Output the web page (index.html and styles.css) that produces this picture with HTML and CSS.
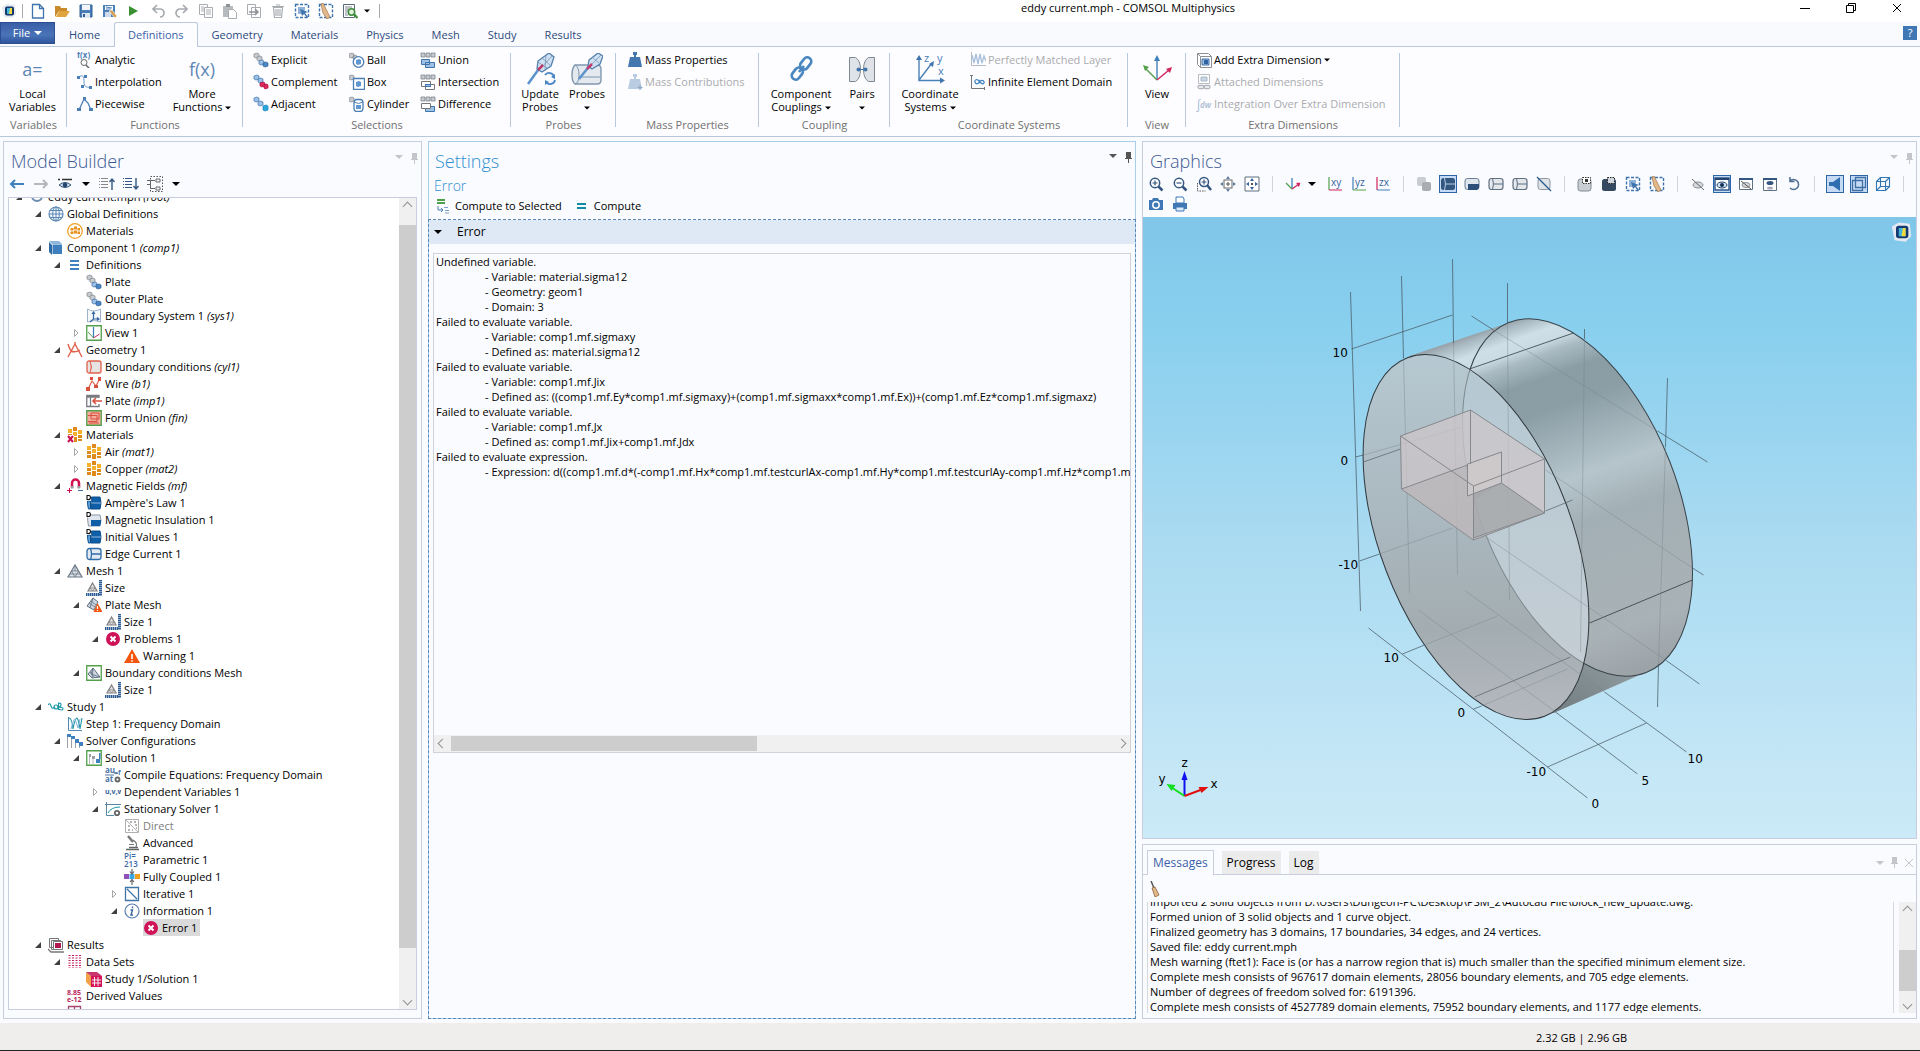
FILE: index.html
```html
<!DOCTYPE html>
<html lang="en">
<head>
<meta charset="utf-8">
<title>eddy current.mph - COMSOL Multiphysics</title>
<link rel="stylesheet" href="styles.css">
</head>
<body>
<svg class="sprite" aria-hidden="true">
<symbol id="app" viewBox="0 0 16 16"><path d="M1 4l5-3 8 1 1 9-4 4-8-1z" fill="#e4e9f1"/><rect x="4" y="3.500" width="9" height="9" rx="2" fill="#14386f"/><path d="M6 5h5v6H6z" fill="#3fb4dd"/><path d="M9 5h2v6H8z" fill="#f3d93f"/></symbol>
<symbol id="new" viewBox="0 0 16 16"><path d="M2.500 1.500h7l4 4v9.500h-11z M9.500 1.500v4h4" fill="#fff" stroke="#3f74ad" stroke-width="1.300"/></symbol>
<symbol id="open" viewBox="0 0 16 16"><path d="M1 14V3h5l1 2h6v3H5z" fill="#c98a2c"/><path d="M2 14l3-6h11l-4 6z" fill="#e0a53e"/></symbol>
<symbol id="save" viewBox="0 0 16 16"><path d="M2 2h12v12H2z" fill="#4a7fb8" stroke="#2f5f95"/><path d="M4 2h8v5H4z" fill="#f2f6fb"/><path d="M4 10h8v5H4z" fill="#dfe7f1"/><path d="M5 11h2v3H5z" fill="#2f5f95"/></symbol>
<symbol id="saveas" viewBox="0 0 16 16"><path d="M1 2h12v12H1z" fill="#4a7fb8"/><path d="M3 3h8v4H3z" fill="#fff"/><path d="M3 9h6v5H3z" fill="#cfdbea"/><path d="M4 4l6 1M4 6h5" stroke="#4a7fb8"/><path d="M7 8l3-1 5 6-2 2z" fill="#d9a04c" stroke="#fff" stroke-width=".6"/></symbol>
<symbol id="run" viewBox="0 0 16 16"><path d="M3 3l9 5-9 5z" fill="#3b9132"/></symbol>
<symbol id="undo" viewBox="0 0 16 16"><path d="M3 6h7a4 4 0 0 1 0 8M7 2L3 6l4 4" fill="none" stroke="#a6aab0" stroke-width="1.700"/></symbol>
<symbol id="redo" viewBox="0 0 16 16"><path d="M13 6H6a4 4 0 0 0 0 8M9 2l4 4-4 4" fill="none" stroke="#a6aab0" stroke-width="1.700"/></symbol>
<symbol id="copy" viewBox="0 0 16 16"><path d="M1.500 1.500h8v10h-8z" fill="#fff" stroke="#a9adb2"/><path d="M6.500 4.500h8v10h-8z" fill="#fff" stroke="#a9adb2"/><path d="M3 4h3M3 6h3M3 8h3M8 7h5M8 9h5M8 11h5" stroke="#a9adb2"/></symbol>
<symbol id="paste" viewBox="0 0 16 16"><path d="M1 3h10v11H1z" fill="#b7babf"/><path d="M4 1h4v3H4z" fill="#8f9398"/><path d="M6.500 6.500h5l3 3v6h-8z" fill="#fff" stroke="#a9adb2"/></symbol>
<symbol id="dup" viewBox="0 0 16 16"><path d="M1.500 1.500h8v10h-8zM5.500 4.500h9v10h-9z" fill="#fff" stroke="#a9adb2"/><path d="M3 9h8M9 6l3 3-3 3" fill="none" stroke="#8f9398" stroke-width="1.500"/></symbol>
<symbol id="del" viewBox="0 0 16 16"><path d="M3.500 4.500h9l-1 10h-7zM2 3.500h12M6 2h4M6 6v7M8 6v7M10 6v7" fill="none" stroke="#a9adb2" stroke-width="1.200"/></symbol>
<symbol id="sel" viewBox="0 0 16 16"><path d="M1.500 1.500h13v13h-13z" fill="none" stroke="#3f74ad" stroke-width="1.400" stroke-dasharray="3 1.500"/><path d="M4 4h7v3l-4 4H4z" fill="#8fb2d8"/><path d="M6 6l8 3-3 1 3 4-1 1-3-4-2 2z" fill="#3f74ad"/></symbol>
<symbol id="selx" viewBox="0 0 16 16"><path d="M1.500 1.500h13v13h-13z" fill="none" stroke="#3f74ad" stroke-width="1.400" stroke-dasharray="3 1.500"/><path d="M3 1l2-1 4 8 3 6-3 2-4-6z" fill="#e2b98a" stroke="#9c7146" stroke-width=".7"/></symbol>
<symbol id="find" viewBox="0 0 16 16"><path d="M1.500 1.500h11v13h-11z" fill="#fff" stroke="#5b6a78"/><path d="M3 4h7M3 6h4M3 8h3M3 10h2M3 12h3" stroke="#7c8793"/><circle cx="9.500" cy="9" r="3.200" fill="#dff0dc" stroke="#3d8c38" stroke-width="1.500"/><path d="M12 11l3.500 4" stroke="#3d8c38" stroke-width="2"/></symbol>
<symbol id="down" viewBox="0 0 8 8"><path d="M0 2h8L4 6z" fill="currentColor"/></symbol>
<symbol id="pin" viewBox="0 0 10 12"><path d="M3 0h5v6h1v1H6v4H5V7H2V6h1z" fill="currentColor"/></symbol>
<symbol id="x" viewBox="0 0 10 10"><path d="M1 1l8 8M9 1L1 9" stroke="currentColor" fill="none"/></symbol>
<symbol id="min" viewBox="0 0 10 10"><path d="M0 5.500h10" stroke="currentColor"/></symbol>
<symbol id="rest" viewBox="0 0 10 10"><path d="M.5 2.500h7v7h-7zM2.500 2.500v-2h7v7h-2" fill="none" stroke="currentColor"/></symbol>
<symbol id="analytic" viewBox="0 0 16 16"><text x="0" y="6" font-size="8" font-weight="700" fill="#4a7fb5">f(x)</text><circle cx="7" cy="10.500" r="3" fill="#fff" stroke="#666"/><path d="M9 13l3 3" stroke="#666" stroke-width="1.500"/></symbol>
<symbol id="interp" viewBox="0 0 16 16"><path d="M1 4c5-5 6-1 6 4s3 6 8 5" fill="none" stroke="#6d9bc9"/><path d="M0 2h3v3H0zM7 1h3v3H7zM4 11h3v3H4zM12 12h3v3h-3z" fill="#4a7fb5"/></symbol>
<symbol id="piece" viewBox="0 0 16 16"><path d="M2 14L7 3l4 4 3 7" fill="none" stroke="#4a7fb5" stroke-width="1.300"/><path d="M0 12h4v3H0zM6 1h3v3H6zM12 12h4v3h-4z" fill="#4a7fb5"/></symbol>
<symbol id="explicit" viewBox="0 0 16 16"><g stroke="#7f868e" stroke-width=".7"><path d="M1 2l3-1 2 1v3L3 6 1 5z" fill="#c7cbd0"/><path d="M4 5l3-1 2 1v3L6 9 4 8z" fill="#c7cbd0"/></g><path d="M6 9l3-1 2 1v3l-3 1-2-1z" fill="#9cc0e6" stroke="#3f74ad" stroke-width=".7"/><path d="M10 11l3-1 2 1v3l-3 1-2-1z" fill="#4a86c4" stroke="#2f5f95" stroke-width=".7"/></symbol>
<symbol id="complement" viewBox="0 0 16 16"><g stroke="#3f74ad" stroke-width=".7" fill="#9cc0e6"><path d="M1 2l3-1 2 1v3L3 6 1 5z"/><path d="M5 5l3-1 2 1v3L7 9 5 8z"/></g><g fill="#e0285e" stroke="#a8103f" stroke-width=".7"><path d="M7 9l3-1 2 1v3l-3 1-2-1z"/><path d="M11 11l3-1 1 1v3l-3 1-1-1z"/></g></symbol>
<symbol id="adjacent" viewBox="0 0 16 16"><g stroke="#3f74ad" stroke-width=".7" fill="#9cc0e6"><path d="M1 2l3-1 2 1v3L3 6 1 5z"/><path d="M5 6l3-1 2 1v3l-3 1-2-1z"/></g><path d="M10 10l3-1 2 1v4l-3 1-2-1z" fill="#29a8e0" stroke="#1b82b3" stroke-width=".7"/></symbol>
<symbol id="ball" viewBox="0 0 16 16"><path d="M0 2l3-1 2 1v3L2 6 0 5zM4 4l2-1 2 1v3H4z" fill="#c7cbd0" stroke="#7f868e" stroke-width=".7"/><circle cx="9.500" cy="10" r="5.300" fill="#fff" stroke="#4a7fb5" stroke-width="1.300"/><path d="M7 8l3-1 2 1v4l-3 1-2-1z" fill="#5f97d0"/></symbol>
<symbol id="box" viewBox="0 0 16 16"><path d="M0 2l3-1 2 1v3L2 6 0 5z" fill="#c7cbd0" stroke="#7f868e" stroke-width=".7"/><path d="M4.500 4.500h11v11h-11z" fill="#fff" stroke="#4a7fb5" stroke-width="1.300"/><path d="M7 8l3-1 2 1v4l-3 1-2-1z" fill="#5f97d0"/></symbol>
<symbol id="cyl" viewBox="0 0 16 16"><path d="M0 2l3-1 2 1v3L2 6 0 5z" fill="#c7cbd0" stroke="#7f868e" stroke-width=".7"/><rect x="5" y="3.500" width="9" height="12" rx="3" fill="#fff" stroke="#4a7fb5" stroke-width="1.300"/><path d="M5 6q4.500 3 9 0" fill="none" stroke="#4a7fb5"/><path d="M7 9h5v4H7z" fill="#5f97d0"/></symbol>
<symbol id="union" viewBox="0 0 16 16"><path d="M1 1h4v4H1zM6 1h4v4H6zM11 1h4v4h-4z" fill="#c7cbd0" stroke="#7f868e" stroke-width=".8"/><path d="M1.500 7.500h8v5h-8zM5.500 10.500h9v5h-9z" fill="#9fc1e4" stroke="#3f74ad"/></symbol>
<symbol id="inter" viewBox="0 0 16 16"><path d="M1 1h4v4H1zM6 1h4v4H6zM11 1h4v4h-4z" fill="#c7cbd0" stroke="#7f868e" stroke-width=".8"/><path d="M1.500 7.500h9v5h-9zM5.500 10.500h9v5h-9z" fill="#fff" stroke="#777"/><path d="M5.500 10.500h5v2h-5z" fill="#9fc1e4" stroke="#3f74ad"/></symbol>
<symbol id="diff" viewBox="0 0 16 16"><path d="M1 1h4v4H1zM6 1h4v4H6zM11 1h4v4h-4z" fill="#c7cbd0" stroke="#7f868e" stroke-width=".8"/><path d="M5.500 10.500h9v5h-9z" fill="#9fc1e4" stroke="#3f74ad"/><path d="M1.500 7.500h9v5h-9z" fill="#fff" stroke="#777"/></symbol>
<symbol id="uprobe" viewBox="0 0 32 32"><path d="M4 31L17 13" stroke="#5b93cc" stroke-width="2.500"/><path d="M14 8l11-8 5 4-3 9-9 6-5-3z" fill="#cfe1f3" stroke="#5580ac" stroke-width="1.300"/><path d="M17 15L28 3M18 5l8 7M14 9l9 6M22 2l-1 14" stroke="#7795b3" stroke-width=".8"/><path d="M14 17l5-5" stroke="#c23a6b" stroke-width="2.500"/><path d="M21 22a5 5 0 0 1 9 2M31 27a5 5 0 0 1-9 2" fill="none" stroke="#4a86c4" stroke-width="1.800"/><path d="M31 21v5l-4-2zM21 32v-5l4 2z" fill="#4a86c4"/></symbol>
<symbol id="probe" viewBox="0 0 32 32"><path d="M4 12h22q4 0 4 4v11q0 4-4 4H4q-3-2-3-9t3-10z" fill="#e4e9ef" stroke="#7f97ae" stroke-width="1.400"/><path d="M4 12q4 2 4 10t-4 9M8 24h21" fill="none" stroke="#7f97ae"/><path d="M8 26L20 11" stroke="#5b93cc" stroke-width="2.500"/><path d="M18 7l9-7 5 3-3 8-8 5-4-3z" fill="#cfe1f3" stroke="#5580ac" stroke-width="1.300"/><path d="M20 12L30 2M21 4l7 6" stroke="#7795b3" stroke-width=".8"/><path d="M16 16l5-5" stroke="#c23a6b" stroke-width="2.500"/></symbol>
<symbol id="mass" viewBox="0 0 16 16"><path d="M6 0h4v3H9v2h4l2 10H1L3 5h4V3H6z" fill="#4377ae"/></symbol>
<symbol id="massc" viewBox="0 0 16 16"><path d="M6 0h4v3H9v2h4l2 10H1L3 5h4V3H6z" fill="#b9cce2"/><path d="M13 11v5M10.500 13.500h5" stroke="#8fa8c5" stroke-width="1.200"/></symbol>
<symbol id="link" viewBox="0 0 32 32"><g fill="none" stroke="#4a86c0" stroke-width="2.700"><rect x="17" y="4" width="8" height="13" rx="4" transform="rotate(38 21 10)"/><rect x="8" y="14" width="8" height="13" rx="4" transform="rotate(38 12 21)"/><path d="M14 19l5-6"/></g></symbol>
<symbol id="pairs" viewBox="0 0 32 32"><path d="M3.500 4.500h6q5 3 5 12t-5 12h-6zM28.500 4.500h-6q-5 3-5 12t5 12h6z" fill="#dfe3e8" stroke="#7d8893"/><circle cx="12.500" cy="16.500" r="2" fill="#3f74ad"/><circle cx="19.500" cy="16.500" r="2" fill="#3f74ad"/><path d="M12 16.500h8" stroke="#3f74ad"/></symbol>
<symbol id="coord" viewBox="0 0 32 32"><path d="M5 5v22.500h23M5 27l13-17" fill="none" stroke="#4a80b8" stroke-width="1.400"/><path d="M5 2l3 5H2zM31 27.500l-5 3v-6zM20 8l-1 6-4-3z" fill="#3f74ad"/><text x="10" y="9" font-size="11" fill="#4a80b8">z</text><text x="23" y="9" font-size="11" fill="#4a80b8">y</text><text x="24" y="22" font-size="11" fill="#4a80b8">x</text></symbol>
<symbol id="pml" viewBox="0 0 16 16"><path d="M1.500 0v13.500H16" fill="none" stroke="#b5bcc4"/><path d="M2 3l2 8 2-9 2 10L10 2l2 9 2-7 2 5" fill="none" stroke="#a9c0da" stroke-width="1.300"/></symbol>
<symbol id="inf" viewBox="0 0 16 16"><path d="M1.500 1v13.500H15M0 1.500h3M14.500 13v3" fill="none" stroke="#76777a"/><path d="M9.500 8c-3-5-6-1-4 1s4-1 4-1 2-3 4-1-1 5-4 0z" fill="none" stroke="#3f80c0" stroke-width="1.200"/></symbol>
<symbol id="view" viewBox="0 0 32 32"><path d="M16 27V6" stroke="#3f80b8" stroke-width="1.400"/><path d="M16 2l3 6h-6z" fill="#3f80b8"/><path d="M16 27L5 16" stroke="#52a04a" stroke-width="1.400"/><path d="M2 12l6 2-4 4z" fill="#52a04a"/><path d="M16 27l12-10" stroke="#d0245a" stroke-width="1.400"/><path d="M31 14l-2 6-4-4z" fill="#d0245a"/></symbol>
<symbol id="adddim" viewBox="0 0 16 16"><path d="M1.500 1.500h11l3 3v11h-11l-3-3zM1.500 1.500l3 3h11M4.500 4.500v11" fill="#fff" stroke="#8b9096"/><path d="M6 7h7v6H6z" fill="#9fc1e4" stroke="#3f6ea8"/><path d="M8 8h4v4H8z" fill="#2f62a0"/></symbol>
<symbol id="attdim" viewBox="0 0 16 16"><path d="M2.500.5h11v9h-11z" fill="#fff" stroke="#b9bdc2"/><path d="M5 3h6v4H5z" fill="#c9d6e6" stroke="#a9b8cc"/><rect x="2" y="11.500" width="6" height="3" rx="1.500" fill="none" stroke="#b0b4b9" stroke-width="1.300"/><rect x="8" y="11.500" width="6" height="3" rx="1.500" fill="none" stroke="#b0b4b9" stroke-width="1.300"/></symbol>
<symbol id="intdim" viewBox="0 0 16 16"><text x="0" y="13" font-size="13" font-style="italic" fill="#a9c0da">∫</text><text x="4" y="12" font-size="8" font-weight="700" font-style="italic" fill="#b3c3d8">dw</text></symbol>

<symbol id="back" viewBox="0 0 16 16"><path d="M15 8H3M6 4L2 8l4 4" fill="none" stroke="#3f80bf" stroke-width="2"/></symbol>
<symbol id="fwd" viewBox="0 0 16 16"><path d="M1 8h12M10 4l4 4-4 4" fill="none" stroke="#b4b7bb" stroke-width="2"/></symbol>
<symbol id="eye" viewBox="0 0 16 16"><path d="M1 3.500h2M5 3.500h10" stroke="#333" stroke-width="1.400"/><path d="M2 9q6-5 12 0-6 5-12 0z" fill="#cfdcea" stroke="#34577f"/><circle cx="8" cy="9" r="2.300" fill="#24466e"/></symbol>
<symbol id="up" viewBox="0 0 16 16"><path d="M0 2.500h1M2 2.500h7M0 5.500h1M2 5.500h7M0 8.500h1M2 8.500h7M0 11.500h1M2 11.500h7" stroke="#888"/><path d="M13 14V3M10.500 6L13 3l2.500 3" fill="none" stroke="#34577f" stroke-width="1.400"/></symbol>
<symbol id="dn" viewBox="0 0 16 16"><path d="M0 2.500h1M2 2.500h7M0 5.500h1M2 5.500h7M0 8.500h1M2 8.500h7M0 11.500h1M2 11.500h7" stroke="#34577f"/><path d="M13 2v11M10.500 10l2.500 3 2.500-3" fill="none" stroke="#34577f" stroke-width="1.400"/></symbol>
<symbol id="nodes" viewBox="0 0 16 16"><path d="M3.500.5h12v15h-12z" fill="none" stroke="#555" stroke-dasharray="1.500 1.500"/><path d="M0 4.500h8M3.500 4.500v8H8M0 8.500h3M9 3h4v3H9zM9 11h4v3H9z" fill="none" stroke="#666"/></symbol>
<symbol id="open-arrow" viewBox="0 0 8 8"><path d="M7 1v6H1z" fill="#404040"/></symbol>
<symbol id="shut-arrow" viewBox="0 0 8 8"><path d="M2.500.5v7L6 4z" fill="#fff" stroke="#a6a6a6"/></symbol>
<symbol id="root" viewBox="0 0 16 16"><circle cx="8" cy="7" r="5" fill="none" stroke="#6d8db5" stroke-width="2"/></symbol>
<symbol id="globe" viewBox="0 0 16 16"><circle cx="8" cy="8" r="7" fill="#f4f8fc" stroke="#5b87b5" stroke-width="1.200"/><ellipse cx="8" cy="8" rx="3.300" ry="7" fill="none" stroke="#5b87b5"/><path d="M1 8h14M2 4.500h12M2 11.500h12M8 1v14" stroke="#5b87b5"/></symbol>
<symbol id="matc" viewBox="0 0 16 16"><circle cx="8" cy="8" r="7.300" fill="#fff" stroke="#f0a028" stroke-width="1.300"/><path d="M3.500 5h3v2.500h-3zM7 3.500h3v3H7zM10.500 5H13v2.500h-2.500zM3.500 8.500h3V11h-3zM7 7.500h3v3H7zM10.500 8.500H13V11h-2.500z" fill="#e8901c"/></symbol>
<symbol id="mat" viewBox="0 0 16 16"><path d="M1 2h4v4H1zM11 3h4v4h-4zM6 5h4v4H6z" fill="#f5b02c"/><path d="M6 0h4v4H6zM1 7h4v3H1zM11 8h4v3h-4zM6 10h4v5H6zM1 11h4v3H1zM11 12h4v2h-4z" fill="#df8a1d"/></symbol>
<symbol id="matx" viewBox="0 0 16 16"><use href="#mat"/><path d="M0 8h7v8H0z" fill="#fff"/><path d="M1 9l5 6M6 9l-5 6" stroke="#cc0f55" stroke-width="2"/></symbol>
<symbol id="comp" viewBox="0 0 16 16"><path d="M1 2l3 3v10l-3-3z" fill="#2f6aa5"/><path d="M1 1h10l3 3H4z" fill="#8db6dd"/><path d="M4.500 4.500H14V14H4.500z" fill="#3f7fbd"/></symbol>
<symbol id="defs" viewBox="0 0 16 16"><path d="M3 4h9M3 8h9M3 12h9" stroke="#3f80bf" stroke-width="2"/></symbol>
<symbol id="bsys" viewBox="0 0 16 16"><path d="M1.500 1q6 4 13 0v13q-6-3-13 0z" fill="#f6f9fc" stroke="#9db4cc"/><path d="M7.500 4v7H13M7.500 11L4 14M6 6l1.500-2L9 6M11 9.500l2 1.500-2 1.500" fill="none" stroke="#3566a0" stroke-width="1.200"/></symbol>
<symbol id="view1" viewBox="0 0 16 16"><path d="M.75.75h14.500v14.500H.75z" fill="#fff" stroke="#53a04b" stroke-width="1.300"/><path d="M7.500 13V2" stroke="#3f80b8" stroke-width="1.300"/><path d="M7.500 13L2 7" stroke="#53a04b"/><path d="M7.500 13l6-4" stroke="#d0245a"/></symbol>
<symbol id="geom" viewBox="0 0 16 16"><path d="M1 2q2 7 5 8M8 2L1 15M8 2l7 13M4 9q4 2 9-1M8 0v3" fill="none" stroke="#e0604c" stroke-width="1.400"/></symbol>
<symbol id="gcyl" viewBox="0 0 16 16"><rect x="1" y="2" width="14" height="12" rx="2" fill="#e6e3e3" stroke="#e0604c" stroke-width="1.300"/><path d="M4 2q3 6 0 12" fill="#f3b7ac" stroke="#e0604c"/></symbol>
<symbol id="wire" viewBox="0 0 16 16"><path d="M2 13L6 5l4 5 4-8" fill="none" stroke="#e0604c" stroke-width="1.200"/><path d="M0 11h4v4H0zM4 1h3v3H4zM8 9h4v3H8zM12 1h3v4h-3z" fill="#d9503c"/></symbol>
<symbol id="imp" viewBox="0 0 16 16"><path d="M13 5V2.500H.75v11H13V11M.75 4h12M4.500 4v9.500" fill="none" stroke="#777b80" stroke-width="1.300"/><path d="M16 8H8M10 5L7 8l3 3" fill="none" stroke="#d9503c" stroke-width="1.600"/></symbol>
<symbol id="fin" viewBox="0 0 16 16"><path d="M.75.75h14.500v14.500H.75z" fill="#f2ae9e" stroke="#53a04b" stroke-width="1.300"/><path d="M2 5.500h9v6H2M5 3h8v6H5zM3 13h10" fill="none" stroke="#d9503c"/></symbol>
<symbol id="magnet" viewBox="0 0 16 16"><path d="M5 10V5a3.500 3.500 0 0 1 7 0v5" fill="none" stroke="#d0104f" stroke-width="2.500"/><path d="M4 8h2.500v2.500H4zM10.500 8H13v2.500h-2.500z" fill="#9a9da1"/><path d="M0 12.500h5M2.500 10v5" stroke="#d0104f"/><path d="M11 12.500h5" stroke="#3f74ad"/></symbol>
<symbol id="dom" viewBox="0 0 16 16"><path d="M5.500 2H14q2 6 0 12H5q1.500-6 .5-12z" fill="#0f5ea8" stroke="#0d4d8a"/><path d="M1.500 6h3v8h-2q-1-3-1-8z" fill="#5da1df" stroke="#0d4d8a"/><path d="M6 8h9" stroke="#cfe0f2" stroke-width=".7"/><path d="M0 0h5v5.500H0z" fill="#fff"/><path d="M1 .5h1.500a2 2 0 0 1 0 4H1z" fill="none" stroke="#111" stroke-width="1.100"/></symbol>
<symbol id="bnd" viewBox="0 0 16 16"><path d="M1.500 3H14q2 5 0 11H2.500q-1-4-1-11z" fill="#dfe6ee" stroke="#8a97a5"/><path d="M5 8h10v3l-1 3H5z" fill="#0f5ea8"/><path d="M0 0h5v5.500H0z" fill="#fff"/><path d="M1 .5h1.500a2 2 0 0 1 0 4H1z" fill="none" stroke="#111" stroke-width="1.100"/></symbol>
<symbol id="edge" viewBox="0 0 16 16"><rect x="1" y="2.500" width="14" height="11" rx="2.500" fill="#e3eaf2" stroke="#2f6ca8" stroke-width="1.300"/><path d="M4.500 2.500q2 5.500 0 11M5 8h10" fill="none" stroke="#2f6ca8" stroke-width="1.300"/></symbol>
<symbol id="mesh" viewBox="0 0 16 16"><path d="M8 2L1 14h14z" fill="#dde3ea" stroke="#6b7784" stroke-width="1.200"/><path d="M4.500 8h7M8 14L4.500 8M8 14l3.500-6M8 2v6M3 11l5 0 5 0" fill="none" stroke="#6b7784" stroke-width=".8"/></symbol>
<symbol id="size" viewBox="0 0 16 16"><path d="M6.500 3L2 11h9z" fill="#e4e4e4" stroke="#808080" stroke-width="1.200"/><path d="M4 8h5L6.500 11z" fill="none" stroke="#808080" stroke-width=".8"/><path d="M14.500 0v16M0 14.500h13" stroke="#2c5c94" stroke-width="3" stroke-dasharray="1.500 .5"/></symbol>
<symbol id="pmesh" viewBox="0 0 16 16"><path d="M1 9l6-8 5 4-4 8z" fill="#cdd6e0" stroke="#5f6f80"/><path d="M3 6l6 4M5 4l5 4M7 1L4 11" stroke="#5f6f80" stroke-width=".8"/><path d="M11.500 6l5 9h-9z" fill="#f2560f"/><path d="M11.500 9v3M11.500 13v1" stroke="#fff" stroke-width="1.200"/></symbol>
<symbol id="err" viewBox="0 0 16 16"><circle cx="8" cy="8" r="7" fill="#cf1257"/><path d="M5.500 5.500l5 5M10.500 5.500l-5 5" stroke="#fff" stroke-width="2"/></symbol>
<symbol id="warn" viewBox="0 0 16 16"><path d="M8 1l8 14H0z" fill="#f2560f"/><path d="M8 6v5M8 12.300v1.500" stroke="#fff" stroke-width="1.600"/></symbol>
<symbol id="bmesh" viewBox="0 0 16 16"><path d="M.75.75h14.500v14.500H.75z" fill="#fff" stroke="#53a04b" stroke-width="1.300"/><path d="M2 9l5-6 7 9-8 1z" fill="#cdd6e0" stroke="#5f6f80"/><path d="M7 3L6 13M4 7l5 6M7 3l-2 6 9 3" fill="none" stroke="#5f6f80" stroke-width=".8"/></symbol>
<symbol id="study" viewBox="0 0 16 16"><path d="M0 6q2-3 3 1t4 1" fill="none" stroke="#1c95a8" stroke-width="1.100"/><circle cx="8" cy="8" r="2" fill="none" stroke="#1c95a8" stroke-width="1.100"/><path d="M10.500 11V4q3 0 2.500 2t-2.500 2q5 0 4.500 2t-4.500 0" fill="none" stroke="#1c95a8" stroke-width="1.100"/></symbol>
<symbol id="freq" viewBox="0 0 16 16"><path d="M1.500 1v13.500H15" fill="none" stroke="#4f87b5"/><path d="M2 2q3 0 4 11Q8 2 10 2q2 3 3 11l2-11" fill="none" stroke="#1c95a8" stroke-width="1.100"/><path d="M4 13Q7 2 8 3l3 9 2-9" fill="none" stroke="#85b5d8"/></symbol>
<symbol id="solv" viewBox="0 0 16 16"><path d="M.5 2v13M4.500 5v10M8.500 7v8M12.500 10v5" stroke="#9aa0a6"/><path d="M0 1h4v3H0zM4 3h4v3H4zM8 6h4v4H8zM12 9h4v4h-4z" fill="#3f80c0"/></symbol>
<symbol id="sol" viewBox="0 0 16 16"><path d="M.75.75h14.500v14.500H.75z" fill="#fff" stroke="#53a04b" stroke-width="1.300"/><path d="M3 4h2v3H3zM6 6h3v3H6z" fill="#9aa0a6"/><path d="M10 9h4v4h-4zM13 3h1.500v6H13z" fill="#3f80c0"/><path d="M3.500 7v7M7 9v5" stroke="#b5b9be"/></symbol>
<symbol id="eqn" viewBox="0 0 16 16"><text x="0" y="6" font-size="8" font-weight="700" fill="#4f77a8">au</text><path d="M0 8h9" stroke="#4f77a8"/><text x="0" y="15" font-size="8" font-weight="700" fill="#4f77a8">at</text><text x="9" y="8" font-size="7" font-weight="700" fill="#4f77a8">=f</text><circle cx="12.500" cy="12.500" r="2" fill="none" stroke="#666" stroke-width="1.800"/></symbol>
<symbol id="uvw" viewBox="0 0 16 16"><text x="0" y="10" font-size="7" font-weight="700" fill="#34649c">u,v,w</text></symbol>
<symbol id="stat" viewBox="0 0 16 16"><path d="M1.500 1v13.500H9M0 3.500h16" fill="none" stroke="#5b87a5"/><path d="M3 12q3-6 12-6" fill="none" stroke="#1c95a8"/><circle cx="12" cy="12" r="2.200" fill="none" stroke="#666" stroke-width="1.800"/></symbol>
<symbol id="direct" viewBox="0 0 16 16"><path d="M1.500 1.500h13v13h-13zM2 2l12 12" fill="#fff" stroke="#b0b0b0"/><path d="M6 4h2M10 4h2M11 7h2M4 8h2M4 12h2M8 12h1M12 10h1" stroke="#999" stroke-width="1.500"/></symbol>
<symbol id="adv" viewBox="0 0 16 16"><path d="M2 14.500h13M5 12.500h9" stroke="#666" stroke-width="1.500"/><path d="M4 1l5 6" fill="none" stroke="#777" stroke-width="2.500"/><path d="M9 5q5 3 3 7M5 9.500h5" fill="none" stroke="#777" stroke-width="1.200"/></symbol>
<symbol id="param" viewBox="0 0 16 16"><text x="0" y="7" font-size="8" fill="#3a6ca8" font-weight="600">Pi=</text><text x="0" y="15" font-size="8" fill="#3a6ca8" font-weight="600">213</text></symbol>
<symbol id="fully" viewBox="0 0 16 16"><path d="M0 5h5v5H0z" fill="#9350b8"/><path d="M5.500 5h5v5h-5z" fill="#39a9e6"/><path d="M11 5h5v5h-5z" fill="#f2a01e"/><path d="M8 0v4M6 2.500L8 5l2-2.500M8 16v-5M6 13l2-2.500 2 2.500" fill="none" stroke="#666" stroke-width="1.200"/></symbol>
<symbol id="iter" viewBox="0 0 16 16"><path d="M1.500 1.500h13v13h-13zM3 3l10 10" fill="#fff" stroke="#3f74a8" stroke-width="1.300"/></symbol>
<symbol id="info" viewBox="0 0 16 16"><circle cx="8" cy="8" r="7" fill="#fff" stroke="#5a7fae" stroke-width="1.200"/><path d="M8.500 3.500v1.800M6.500 7h2l-1.500 5h2" fill="none" stroke="#34649c" stroke-width="1.400"/></symbol>
<symbol id="results" viewBox="0 0 16 16"><path d="M1.500 1.500h9v9h-9zM3.500 3.500h9v9h-9z" fill="#fff" stroke="#777"/><path d="M5.500 4.500h9v8h-9z" fill="#fff" stroke="#777"/><path d="M7 6h6v5H7z" fill="#b01850"/><path d="M0 12l3 3h13" fill="none" stroke="#777" stroke-width="1.300"/></symbol>
<symbol id="dsets" viewBox="0 0 16 16"><path d="M2.500 1v13M6 1v13M9.500 1v13M13 1v13" stroke="#c01f5c" stroke-width="2" stroke-dasharray="1 1.500"/></symbol>
<symbol id="dset" viewBox="0 0 16 16"><path d="M0 1l5 4v11l-5-5z" fill="#f2a04a"/><path d="M0 1h11l5 4H5z" fill="#c9356c"/><path d="M5 5h11v11H5z" fill="#d41458"/><path d="M6 9h9M6 12h9M8.500 6v9M12 6v9" stroke="#fff" stroke-width=".9"/></symbol>
<symbol id="derived" viewBox="0 0 16 16"><text x="0" y="7" font-size="7" font-weight="700" fill="#b81e5c">8.85</text><text x="0" y="14" font-size="7" font-weight="700" fill="#b81e5c">e-12</text></symbol>
<symbol id="tables" viewBox="0 0 16 16"><path d="M1.500 1.500h12v13h-12zM1.500 5.500h12M7.500 1.500v13" fill="#fff" stroke="#a3456f" stroke-width="1.300"/></symbol>
<symbol id="csel" viewBox="0 0 16 16"><path d="M2 1h8v2H2zM2 4h8v2H2z" fill="#4fa04a"/><path d="M3 8v4h4M6 10l2 2-2 2" fill="none" stroke="#4a7fb5"/><path d="M9 9.500h4M10 12.500h4M10 15h4" stroke="#7a9fc5"/></symbol>
<symbol id="eq" viewBox="0 0 16 16"><path d="M3 6h9M3 10h9" stroke="#0f8ba5" stroke-width="2.200"/></symbol>

<symbol id="zin" viewBox="0 0 16 16"><circle cx="7" cy="7" r="4.700" fill="#fff" stroke="#34577f" stroke-width="1.500"/><path d="M10.500 10.500l4 4" stroke="#34577f" stroke-width="2.500"/><path d="M4.500 7h5M7 4.500v5" stroke="#34577f" stroke-width="1.200"/></symbol>
<symbol id="zout" viewBox="0 0 16 16"><circle cx="7" cy="7" r="4.700" fill="#fff" stroke="#34577f" stroke-width="1.500"/><path d="M10.500 10.500l4 4" stroke="#34577f" stroke-width="2.500"/><path d="M4.500 7h5" stroke="#34577f" stroke-width="1.200"/></symbol>
<symbol id="zbox" viewBox="0 0 16 16"><path d="M1.500 7v8h8" fill="none" stroke="#555" stroke-dasharray="1.500 1"/><circle cx="8" cy="6" r="4.500" fill="#fff" stroke="#34577f" stroke-width="1.500"/><path d="M11 9l4 5" stroke="#34577f" stroke-width="2.500"/><path d="M5.500 6h5M8 3.500v5" stroke="#34577f" stroke-width="1.200"/></symbol>
<symbol id="zsel" viewBox="0 0 16 16"><rect x="4" y="4" width="8" height="8" fill="#fff" stroke="#666"/><path d="M6 8h4M8 6v4" stroke="#555"/><path d="M8 0l2 3H6zM8 16l2-3H6zM0 8l3-2v4zM16 8l-3-2v4z" fill="#5f7f9f"/></symbol>
<symbol id="zext" viewBox="0 0 16 16"><path d="M1 1h14v14H1z" fill="#fff" stroke="#5f7080"/><path d="M8 2l2 3H6zM8 14l2-3H6zM2 8l3-2v4zM14 8l-3-2v4z" fill="#34649c"/><path d="M7 8h2" stroke="#555" stroke-width="2"/></symbol>
<symbol id="axes" viewBox="0 0 16 16"><path d="M7 13V2" stroke="#3f80b8" stroke-width="1.300"/><path d="M7 13L1 7" stroke="#53a04b" stroke-width="1.300"/><path d="M7 13l7-5M11.500 7.500l3 0-1 3" fill="none" stroke="#d0245a" stroke-width="1.300"/></symbol>
<symbol id="xy" viewBox="0 0 16 16"><path d="M2 1v13" stroke="#53a04b" stroke-width="1.200"/><path d="M2 14h13" stroke="#d0245a"/><text x="4" y="10" font-size="10" fill="#34649c">xy</text></symbol>
<symbol id="yz" viewBox="0 0 16 16"><path d="M2 1v13" stroke="#3f80b8" stroke-width="1.200"/><path d="M2 14h13" stroke="#53a04b"/><text x="4" y="10" font-size="10" fill="#34649c">yz</text></symbol>
<symbol id="zx" viewBox="0 0 16 16"><path d="M2 1v13" stroke="#d0245a" stroke-width="1.200"/><path d="M2 14h13" stroke="#3f80b8"/><text x="4" y="10" font-size="10" fill="#34649c">zx</text></symbol>
<symbol id="s1" viewBox="0 0 16 16"><rect x="1" y="1" width="9" height="9" rx="2" fill="#c9ccd0"/><rect x="6" y="6" width="9" height="9" rx="2" fill="#a9adb2"/></symbol>
<symbol id="s2" viewBox="0 0 16 16"><rect x="1" y="2" width="14" height="12" rx="2.500" fill="#34577f"/><path d="M4.500 2q2 6 0 12M5 8h10" fill="none" stroke="#b5cfea"/></symbol>
<symbol id="s3" viewBox="0 0 16 16"><rect x="1" y="2.500" width="14" height="11" rx="2.500" fill="#dfe5ec" stroke="#6b7f95"/><path d="M4 8h11v4l-2 2H4z" fill="#2c4f7a"/></symbol>
<symbol id="s4" viewBox="0 0 16 16"><rect x="1" y="2.500" width="14" height="11" rx="2.500" fill="#e3e6ea" stroke="#5f7080" stroke-width="1.200"/><path d="M4.500 2.500q2 5.500 0 11M5 8h10" fill="none" stroke="#5f7080"/></symbol>
<symbol id="s6" viewBox="0 0 16 16"><rect x="2" y="2.500" width="12" height="11" rx="2.500" fill="#dfe3e8" stroke="#8a97a5"/><path d="M1 1l14 14" stroke="#24598f" stroke-width="1.300"/></symbol>
<symbol id="h1" viewBox="0 0 16 16"><rect x="1" y="3" width="13" height="12" rx="2.500" fill="#c9ced5" stroke="#808993"/><path d="M5.500 1.500h8v6h-8z" fill="#fff" stroke="#333" stroke-dasharray="1.500 1"/><path d="M8 3h3v3H8z" fill="#333"/></symbol>
<symbol id="h2" viewBox="0 0 16 16"><rect x="1" y="3" width="14" height="12" rx="2.500" fill="#34485f"/><path d="M6.500 1.500h7v6h-7z" fill="#cfd6de" stroke="#222" stroke-dasharray="1.500 1"/></symbol>
<symbol id="v1" viewBox="0 0 16 16"><ellipse cx="8" cy="9" rx="5" ry="3" fill="#d4d7db" stroke="#8a9097"/><path d="M2 3l12 11" stroke="#666"/></symbol>
<symbol id="v2" viewBox="0 0 16 16"><path d="M1 2h14v12H1z" fill="#fff" stroke="#2f5c8f" stroke-width="1.500"/><path d="M1 3h14" stroke="#24466e" stroke-width="2"/><ellipse cx="8" cy="9" rx="5" ry="3" fill="#cfe0f2" stroke="#24466e"/><circle cx="8" cy="9" r="2" fill="#152f50"/></symbol>
<symbol id="v3" viewBox="0 0 16 16"><path d="M1.500 2.500h13v11h-13z" fill="#fff" stroke="#5f7080"/><path d="M1 3h14" stroke="#34577f" stroke-width="2"/><ellipse cx="8" cy="9" rx="4" ry="2.500" fill="#d4d7db" stroke="#8a9097"/><path d="M3 5l10 8" stroke="#555"/></symbol>
<symbol id="v4" viewBox="0 0 16 16"><path d="M1.500 2.500h13v12h-13z" fill="#fff" stroke="#5f7080"/><path d="M1 3h14" stroke="#34577f" stroke-width="2"/><ellipse cx="8" cy="7" rx="3.500" ry="2" fill="#34577f"/><ellipse cx="8" cy="12" rx="3" ry="1.600" fill="#aab"/></symbol>
<symbol id="rst" viewBox="0 0 16 16"><path d="M4 12a5 5 0 1 0 0-7M4 1v4.500h4.500" fill="none" stroke="#4f6f92" stroke-width="1.500"/></symbol>
<symbol id="light" viewBox="0 0 16 16"><path d="M2 6h4l7-5v14L6 10H2z" fill="#2f6eb0"/></symbol>
<symbol id="trans" viewBox="0 0 16 16"><path d="M1.500 4.500h10v10h-10zM4.500 1.500h10v10h-10z" fill="none" stroke="#3d6ea5" stroke-width="1.300"/></symbol>
<symbol id="wf" viewBox="0 0 16 16"><path d="M1.500 5.500h9v9h-9zM5.500 1.500h9v9h-9zM1.500 5.500l4-4M10.500 5.500l4-4M10.500 14.500l4-4M1.500 14.500l4-4" fill="none" stroke="#2f78b5" stroke-width="1.100"/></symbol>
<symbol id="cam" viewBox="0 0 16 16"><path d="M1 4h3l1-2h5l1 2h4v10H1z" fill="#3f78b5"/><circle cx="8" cy="9" r="3.200" fill="none" stroke="#fff" stroke-width="1.500"/></symbol>
<symbol id="print" viewBox="0 0 16 16"><path d="M4 1h7l1 2v4H4z" fill="#fff" stroke="#3f78b5"/><path d="M1 7h14v6H1z" fill="#3f78b5"/><path d="M4 11h8v4H4z" fill="#dce9f6" stroke="#3f78b5"/></symbol>
<symbol id="broom" viewBox="0 0 16 16"><path d="M3 0l3 7" stroke="#555" stroke-width="1.500"/><path d="M4 7l3-1 4 8-4 2z" fill="#e2b98a" stroke="#8a6239" stroke-width=".8"/></symbol>
</svg>

<header class="titlebar">
  <div class="quick">
    <svg class="i"><use href="#app"/></svg><span class="bar"></span>
    <button aria-label="New"><svg class="i"><use href="#new"/></svg></button>
    <button aria-label="Open"><svg class="i"><use href="#open"/></svg></button>
    <button aria-label="Save"><svg class="i"><use href="#save"/></svg></button>
    <button aria-label="Save as"><svg class="i"><use href="#saveas"/></svg></button>
    <button aria-label="Run"><svg class="i"><use href="#run"/></svg></button>
    <button aria-label="Undo" disabled><svg class="i"><use href="#undo"/></svg></button>
    <button aria-label="Redo" disabled><svg class="i"><use href="#redo"/></svg></button>
    <button aria-label="Copy" disabled><svg class="i"><use href="#copy"/></svg></button>
    <button aria-label="Paste" disabled><svg class="i"><use href="#paste"/></svg></button>
    <button aria-label="Duplicate" disabled><svg class="i"><use href="#dup"/></svg></button>
    <button aria-label="Delete" disabled><svg class="i"><use href="#del"/></svg></button>
    <button aria-label="Select all"><svg class="i"><use href="#sel"/></svg></button>
    <button aria-label="Clear selection"><svg class="i"><use href="#selx"/></svg></button>
    <button aria-label="Find"><svg class="i"><use href="#find"/></svg></button>
    <button class="caret-btn" aria-label="Customize toolbar"><svg class="car"><use href="#down"/></svg></button>
    <span class="bar last"></span>
  </div>
  <h1>eddy current.mph - COMSOL Multiphysics</h1>
  <div class="win">
    <button aria-label="Minimize"><svg><use href="#min"/></svg></button>
    <button aria-label="Restore"><svg><use href="#rest"/></svg></button>
    <button aria-label="Close"><svg><use href="#x"/></svg></button>
  </div>
</header>

<nav class="tabs">
  <button class="file">File <svg class="car"><use href="#down"/></svg></button>
  <button>Home</button><button class="on">Definitions</button><button>Geometry</button><button>Materials</button><button>Physics</button><button>Mesh</button><button>Study</button><button>Results</button>
  <button class="help" aria-label="Help">?</button>
</nav>

<section class="ribbon">
  <div class="group g-var"><div class="body"><button class="big"><span class="glyph">a=</span>Local<br>Variables</button></div><h2>Variables</h2></div>
  <div class="group g-fun"><div class="body">
    <div class="stack"><button><svg class="i"><use href="#analytic"/></svg>Analytic</button><button><svg class="i"><use href="#interp"/></svg>Interpolation</button><button><svg class="i"><use href="#piece"/></svg>Piecewise</button></div>
    <button class="big"><span class="glyph">f(x)</span>More<br>Functions <svg class="car"><use href="#down"/></svg></button></div><h2>Functions</h2></div>
  <div class="group g-sel"><div class="body">
    <div class="stack"><button><svg class="i"><use href="#explicit"/></svg>Explicit</button><button><svg class="i"><use href="#complement"/></svg>Complement</button><button><svg class="i"><use href="#adjacent"/></svg>Adjacent</button></div>
    <div class="stack"><button><svg class="i"><use href="#ball"/></svg>Ball</button><button><svg class="i"><use href="#box"/></svg>Box</button><button><svg class="i"><use href="#cyl"/></svg>Cylinder</button></div>
    <div class="stack"><button><svg class="i"><use href="#union"/></svg>Union</button><button><svg class="i"><use href="#inter"/></svg>Intersection</button><button><svg class="i"><use href="#diff"/></svg>Difference</button></div></div><h2>Selections</h2></div>
  <div class="group g-pro"><div class="body"><button class="big"><svg class="b"><use href="#uprobe"/></svg>Update<br>Probes</button><button class="big"><svg class="b"><use href="#probe"/></svg>Probes<br><svg class="car"><use href="#down"/></svg></button></div><h2>Probes</h2></div>
  <div class="group g-mas"><div class="body"><div class="stack"><button><svg class="i"><use href="#mass"/></svg>Mass Properties</button><button disabled><svg class="i"><use href="#massc"/></svg>Mass Contributions</button></div></div><h2>Mass Properties</h2></div>
  <div class="group g-cou"><div class="body"><button class="big"><svg class="b"><use href="#link"/></svg>Component<br>Couplings <svg class="car"><use href="#down"/></svg></button><button class="big"><svg class="b"><use href="#pairs"/></svg>Pairs<br><svg class="car"><use href="#down"/></svg></button></div><h2>Coupling</h2></div>
  <div class="group g-coo"><div class="body"><button class="big"><svg class="b"><use href="#coord"/></svg>Coordinate<br>Systems <svg class="car"><use href="#down"/></svg></button><div class="stack"><button disabled><svg class="i"><use href="#pml"/></svg>Perfectly Matched Layer</button><button><svg class="i"><use href="#inf"/></svg>Infinite Element Domain</button></div></div><h2>Coordinate Systems</h2></div>
  <div class="group g-vie"><div class="body"><button class="big"><svg class="b"><use href="#view"/></svg>View</button></div><h2>View</h2></div>
  <div class="group g-ext"><div class="body"><div class="stack"><button><svg class="i"><use href="#adddim"/></svg>Add Extra Dimension <svg class="car"><use href="#down"/></svg></button><button disabled><svg class="i"><use href="#attdim"/></svg>Attached Dimensions</button><button disabled><svg class="i"><use href="#intdim"/></svg>Integration Over Extra Dimension</button></div></div><h2>Extra Dimensions</h2></div>
</section>

<main class="work">
  <section class="panel model">
    <header class="ptitle"><h2>Model Builder</h2><div class="pctl"><svg class="car"><use href="#down"/></svg><svg class="pin"><use href="#pin"/></svg></div></header>
    <div class="tools">
      <button aria-label="Back"><svg class="i"><use href="#back"/></svg></button><button aria-label="Forward" disabled><svg class="i"><use href="#fwd"/></svg></button><button aria-label="Show"><svg class="i"><use href="#eye"/></svg></button><button class="drop" aria-label="Show options"><svg class="car"><use href="#down"/></svg></button><button aria-label="Move up"><svg class="i"><use href="#up"/></svg></button><button aria-label="Move down"><svg class="i"><use href="#dn"/></svg></button><button aria-label="Node view"><svg class="i"><use href="#nodes"/></svg></button><button class="drop" aria-label="Node view options"><svg class="car"><use href="#down"/></svg></button>
    </div>
    <div class="treebox">
      <ul class="tree">
        <li class="n0"><svg class="a"><use href="#open-arrow"/></svg><svg class="i"><use href="#root"/></svg>eddy current.mph <i>(root)</i></li>
        <li class="n1"><svg class="a"><use href="#open-arrow"/></svg><svg class="i"><use href="#globe"/></svg>Global Definitions</li>
        <li class="n2"><svg class="a"></svg><svg class="i"><use href="#matc"/></svg>Materials</li>
        <li class="n1"><svg class="a"><use href="#open-arrow"/></svg><svg class="i"><use href="#comp"/></svg>Component 1 <i>(comp1)</i></li>
        <li class="n2"><svg class="a"><use href="#open-arrow"/></svg><svg class="i"><use href="#defs"/></svg>Definitions</li>
        <li class="n3"><svg class="a"></svg><svg class="i"><use href="#explicit"/></svg>Plate</li>
        <li class="n3"><svg class="a"></svg><svg class="i"><use href="#explicit"/></svg>Outer Plate</li>
        <li class="n3"><svg class="a"></svg><svg class="i"><use href="#bsys"/></svg>Boundary System 1 <i>(sys1)</i></li>
        <li class="n3"><svg class="a"><use href="#shut-arrow"/></svg><svg class="i"><use href="#view1"/></svg>View 1</li>
        <li class="n2"><svg class="a"><use href="#open-arrow"/></svg><svg class="i"><use href="#geom"/></svg>Geometry 1</li>
        <li class="n3"><svg class="a"></svg><svg class="i"><use href="#gcyl"/></svg>Boundary conditions <i>(cyl1)</i></li>
        <li class="n3"><svg class="a"></svg><svg class="i"><use href="#wire"/></svg>Wire <i>(b1)</i></li>
        <li class="n3"><svg class="a"></svg><svg class="i"><use href="#imp"/></svg>Plate <i>(imp1)</i></li>
        <li class="n3"><svg class="a"></svg><svg class="i"><use href="#fin"/></svg>Form Union <i>(fin)</i></li>
        <li class="n2"><svg class="a"><use href="#open-arrow"/></svg><svg class="i"><use href="#matx"/></svg>Materials</li>
        <li class="n3"><svg class="a"><use href="#shut-arrow"/></svg><svg class="i"><use href="#mat"/></svg>Air <i>(mat1)</i></li>
        <li class="n3"><svg class="a"><use href="#shut-arrow"/></svg><svg class="i"><use href="#mat"/></svg>Copper <i>(mat2)</i></li>
        <li class="n2"><svg class="a"><use href="#open-arrow"/></svg><svg class="i"><use href="#magnet"/></svg>Magnetic Fields <i>(mf)</i></li>
        <li class="n3"><svg class="a"></svg><svg class="i"><use href="#dom"/></svg>Ampère's Law 1</li>
        <li class="n3"><svg class="a"></svg><svg class="i"><use href="#bnd"/></svg>Magnetic Insulation 1</li>
        <li class="n3"><svg class="a"></svg><svg class="i"><use href="#dom"/></svg>Initial Values 1</li>
        <li class="n3"><svg class="a"></svg><svg class="i"><use href="#edge"/></svg>Edge Current 1</li>
        <li class="n2"><svg class="a"><use href="#open-arrow"/></svg><svg class="i"><use href="#mesh"/></svg>Mesh 1</li>
        <li class="n3"><svg class="a"></svg><svg class="i"><use href="#size"/></svg>Size</li>
        <li class="n3"><svg class="a"><use href="#open-arrow"/></svg><svg class="i"><use href="#pmesh"/></svg>Plate Mesh</li>
        <li class="n4"><svg class="a"></svg><svg class="i"><use href="#size"/></svg>Size 1</li>
        <li class="n4"><svg class="a"><use href="#open-arrow"/></svg><svg class="i"><use href="#err"/></svg>Problems 1</li>
        <li class="n5"><svg class="a"></svg><svg class="i"><use href="#warn"/></svg>Warning 1</li>
        <li class="n3"><svg class="a"><use href="#open-arrow"/></svg><svg class="i"><use href="#bmesh"/></svg>Boundary conditions Mesh</li>
        <li class="n4"><svg class="a"></svg><svg class="i"><use href="#size"/></svg>Size 1</li>
        <li class="n1"><svg class="a"><use href="#open-arrow"/></svg><svg class="i"><use href="#study"/></svg>Study 1</li>
        <li class="n2"><svg class="a"></svg><svg class="i"><use href="#freq"/></svg>Step 1: Frequency Domain</li>
        <li class="n2"><svg class="a"><use href="#open-arrow"/></svg><svg class="i"><use href="#solv"/></svg>Solver Configurations</li>
        <li class="n3"><svg class="a"><use href="#open-arrow"/></svg><svg class="i"><use href="#sol"/></svg>Solution 1</li>
        <li class="n4"><svg class="a"></svg><svg class="i"><use href="#eqn"/></svg>Compile Equations: Frequency Domain</li>
        <li class="n4"><svg class="a"><use href="#shut-arrow"/></svg><svg class="i"><use href="#uvw"/></svg>Dependent Variables 1</li>
        <li class="n4"><svg class="a"><use href="#open-arrow"/></svg><svg class="i"><use href="#stat"/></svg>Stationary Solver 1</li>
        <li class="n5 off"><svg class="a"></svg><svg class="i"><use href="#direct"/></svg>Direct</li>
        <li class="n5"><svg class="a"></svg><svg class="i"><use href="#adv"/></svg>Advanced</li>
        <li class="n5"><svg class="a"></svg><svg class="i"><use href="#param"/></svg>Parametric 1</li>
        <li class="n5"><svg class="a"></svg><svg class="i"><use href="#fully"/></svg>Fully Coupled 1</li>
        <li class="n5"><svg class="a"><use href="#shut-arrow"/></svg><svg class="i"><use href="#iter"/></svg>Iterative 1</li>
        <li class="n5"><svg class="a"><use href="#open-arrow"/></svg><svg class="i"><use href="#info"/></svg>Information 1</li>
        <li class="n6"><svg class="a"></svg><span class="picked"><svg class="i"><use href="#err"/></svg>Error 1</span></li>
        <li class="n1"><svg class="a"><use href="#open-arrow"/></svg><svg class="i"><use href="#results"/></svg>Results</li>
        <li class="n2"><svg class="a"><use href="#open-arrow"/></svg><svg class="i"><use href="#dsets"/></svg>Data Sets</li>
        <li class="n3"><svg class="a"></svg><svg class="i"><use href="#dset"/></svg>Study 1/Solution 1</li>
        <li class="n2"><svg class="a"></svg><svg class="i"><use href="#derived"/></svg>Derived Values</li>
        <li class="n2"><svg class="a"></svg><svg class="i"><use href="#tables"/></svg></li>
      </ul>
      <div class="vscroll"><button class="s-up" aria-label="Scroll up"></button><div class="s-gap"></div><div class="s-thumb"></div><div class="s-rest"></div><button class="s-dn" aria-label="Scroll down"></button></div>
    </div>
  </section>

  <section class="panel settings">
    <header class="ptitle"><h2>Settings</h2><div class="pctl"><svg class="car"><use href="#down"/></svg><svg class="pin"><use href="#pin"/></svg></div></header>
    <h3>Error</h3>
    <div class="cmds"><button><svg class="i"><use href="#csel"/></svg>Compute to Selected</button><button><svg class="i"><use href="#eq"/></svg>Compute</button></div>
    <div class="focus">
      <button class="sect"><svg class="car"><use href="#down"/></svg>Error</button>
      <div class="errbox">
        <textarea readonly wrap="off" aria-label="Error message">Undefined variable.
&#9;- Variable: material.sigma12
&#9;- Geometry: geom1
&#9;- Domain: 3
Failed to evaluate variable.
&#9;- Variable: comp1.mf.sigmaxy
&#9;- Defined as: material.sigma12
Failed to evaluate variable.
&#9;- Variable: comp1.mf.Jix
&#9;- Defined as: ((comp1.mf.Ey*comp1.mf.sigmaxy)+(comp1.mf.sigmaxx*comp1.mf.Ex))+(comp1.mf.Ez*comp1.mf.sigmaxz)
Failed to evaluate variable.
&#9;- Variable: comp1.mf.Jx
&#9;- Defined as: comp1.mf.Jix+comp1.mf.Jdx
Failed to evaluate expression.
&#9;- Expression: d((comp1.mf.d*(-comp1.mf.Hx*comp1.mf.testcurlAx-comp1.mf.Hy*comp1.mf.testcurlAy-comp1.mf.Hz*comp1.mf.testcurlAz))</textarea>
        <div class="hscroll"><button class="s-lt" aria-label="Scroll left"></button><div class="s-thumb"></div><div class="s-rest"></div><button class="s-rt" aria-label="Scroll right"></button></div>
      </div>
    </div>
  </section>

  <div class="right">
    <section class="panel graphics">
      <header class="ptitle"><h2>Graphics</h2><div class="pctl"><svg class="car"><use href="#down"/></svg><svg class="pin"><use href="#pin"/></svg></div></header>
      <div class="tools">
        <button aria-label="Zoom in"><svg class="i"><use href="#zin"/></svg></button><button aria-label="Zoom out"><svg class="i"><use href="#zout"/></svg></button><button aria-label="Zoom box"><svg class="i"><use href="#zbox"/></svg></button><button aria-label="Zoom selected"><svg class="i"><use href="#zsel"/></svg></button><button aria-label="Zoom extents"><svg class="i"><use href="#zext"/></svg></button><span class="sep"></span>
        <button aria-label="Default view"><svg class="i"><use href="#axes"/></svg></button><button class="drop near" aria-label="View list"><svg class="car"><use href="#down"/></svg></button><button aria-label="xy view"><svg class="i"><use href="#xy"/></svg></button><button aria-label="yz view"><svg class="i"><use href="#yz"/></svg></button><button aria-label="zx view"><svg class="i"><use href="#zx"/></svg></button><span class="sep"></span>
        <button aria-label="Select objects"><svg class="i"><use href="#s1"/></svg></button><button class="on" aria-label="Select domains"><svg class="i"><use href="#s2"/></svg></button><button aria-label="Select boundaries"><svg class="i"><use href="#s3"/></svg></button><button aria-label="Select edges"><svg class="i"><use href="#s4"/></svg></button><button aria-label="Select points"><svg class="i"><use href="#s4"/></svg></button><button aria-label="No selection"><svg class="i"><use href="#s6"/></svg></button><span class="sep"></span>
        <button aria-label="Hide"><svg class="i"><use href="#h1"/></svg></button><button aria-label="Hide entities"><svg class="i"><use href="#h2"/></svg></button><button aria-label="Select box"><svg class="i"><use href="#sel"/></svg></button><button aria-label="Deselect box"><svg class="i"><use href="#selx"/></svg></button><span class="sep"></span>
        <button aria-label="Click and hide"><svg class="i"><use href="#v1"/></svg></button><button class="on" aria-label="View unhidden"><svg class="i"><use href="#v2"/></svg></button><button aria-label="View hidden"><svg class="i"><use href="#v3"/></svg></button><button aria-label="View all"><svg class="i"><use href="#v4"/></svg></button><button aria-label="Reset hiding"><svg class="i"><use href="#rst"/></svg></button><span class="sep"></span>
        <button class="on" aria-label="Scene light"><svg class="i"><use href="#light"/></svg></button><button class="on" aria-label="Transparency"><svg class="i"><use href="#trans"/></svg></button><button aria-label="Wireframe"><svg class="i"><use href="#wf"/></svg></button><span class="sep"></span>
        <button aria-label="Image snapshot"><svg class="i"><use href="#cam"/></svg></button><button aria-label="Print"><svg class="i"><use href="#print"/></svg></button>
      </div>
      <svg class="canvas" viewBox="1142 217 774 621" preserveAspectRatio="xMidYMid slice" role="img" aria-label="Geometry view">
        <defs>
          <linearGradient id="sky" x1="0" y1="0" x2="0" y2="1"><stop offset="0" stop-color="#80c6e9"/><stop offset=".18" stop-color="#89cfee"/><stop offset=".5" stop-color="#a8daf1"/><stop offset="1" stop-color="#cceaf7"/></linearGradient>
          <linearGradient id="side" gradientUnits="userSpaceOnUse" x1="1415" y1="355" x2="1543" y2="716"><stop offset="0" stop-color="#97a2a8"/><stop offset=".015" stop-color="#a9b9c1"/><stop offset=".05" stop-color="#cfdfe7"/><stop offset=".08" stop-color="#cadbe4"/><stop offset=".11" stop-color="#a9bac2"/><stop offset=".17" stop-color="#8a9ca4"/><stop offset=".25" stop-color="#8b9da5"/><stop offset=".44" stop-color="#b6c5cc"/><stop offset=".56" stop-color="#a2afb5"/><stop offset=".85" stop-color="#a9b2b6"/><stop offset="1" stop-color="#98a0a4"/></linearGradient>
          <linearGradient id="under" x1="0" y1="1" x2="1" y2="0"><stop offset="0" stop-color="#6f797d"/><stop offset="1" stop-color="#98a5aa"/></linearGradient>
          <linearGradient id="face" gradientUnits="userSpaceOnUse" x1="0" y1="354" x2="0" y2="720"><stop offset="0" stop-color="#b6c8d1"/><stop offset=".5" stop-color="#a9b6bd"/><stop offset=".75" stop-color="#a3adb1"/><stop offset="1" stop-color="#b5b9bf"/></linearGradient>
          <linearGradient id="lens" gradientUnits="userSpaceOnUse" x1="0" y1="369" x2="0" y2="660"><stop offset="0" stop-color="#b5c9d3"/><stop offset="1" stop-color="#c4cdd4"/></linearGradient>
          <clipPath id="front"><ellipse rx="192" ry="96" transform="translate(1475.500 537) rotate(69.070)"/></clipPath>
          <clipPath id="rear"><ellipse rx="188" ry="99" transform="translate(1577 497.500) rotate(68.550)"/></clipPath>
        </defs>
        <rect x="1142" y="217" width="774" height="621" fill="url(#sky)"/>
        <path d="M1409 356L1500 325.500 1577 430 1560 600 1637 676 1553 713 1480 650z" fill="url(#side)"/>
        <path d="M1560 640L1640 674 1553 713 1540 700z" fill="url(#under)"/>
        <rect x="1400" y="300" width="320" height="400" fill="url(#side)" clip-path="url(#rear)"/>
        <ellipse rx="188" ry="99" transform="translate(1577 497.500) rotate(68.550)" fill="none" stroke="#39434a"/>
        <rect x="1350" y="340" width="250" height="390" fill="url(#face)" clip-path="url(#front)"/>
        <g clip-path="url(#front)"><rect x="1400" y="300" width="320" height="400" fill="url(#lens)" clip-path="url(#rear)"/><ellipse rx="188" ry="99" transform="translate(1577 497.500) rotate(68.550)" fill="none" stroke="#7f8a90"/></g>
        <ellipse rx="192" ry="96" transform="translate(1475.500 537) rotate(69.070)" fill="none" stroke="#30383d"/>
        <g stroke="#43525c" stroke-opacity=".7" fill="none">
          <path d="M1350 292L1360 611M1401 276l2 82M1452 259l1 84M1507 283v40M1584 329v10M1667 378l-2 69M1658 664l-1 43M1351 349l101-34M1355 457l8-2M1359 561l20-7M1471 316l22 14M1657 431l50 31M1692 568l11 7M1665 660l34 24M1368 628L1587 798M1402 654l22-9M1473 709l8-3M1555 712l82 62M1604 692l82 60M1547 767l99-44"/>
          <path d="M1469 369l104-36M1589 623l103-43" stroke="#222a2e"/>
          <path d="M1363 462l37-13M1545 511l27-11M1474 697l96-40" stroke="#555f66"/>
        </g>
        <g stroke="#79828a" stroke-opacity=".4" fill="none"><path d="M1403 358l6 235M1453 343l4 232M1507 323l2 277M1584 339l-4 313M1665 447l-7 217M1363 455l99-28M1379 554l73-26M1493 330l164 101M1545 470l147 98M1487 538l178 122M1418 610l137 102M1465 591l139 101M1424 645l73-29M1481 706l86-37"/></g>
        <g stroke="#85888c" stroke-width="1">
          <path d="M1400 436l70-26 74 49v54l-71 27-72-51z" fill="#cdc6c8" fill-opacity=".75"/>
          <path d="M1401 489l66-24 34 18-28 18v39z" fill="#a9a7aa" fill-opacity=".35" stroke="none"/>
          <path d="M1473 492l28-9 43 30-71 25z" fill="#989ca0" fill-opacity=".6"/>
          <path d="M1467 464l34-12v31l-34 13z" fill="#cdc8ca"/>
          <path d="M1400 436l73 50 71-27M1473 486v54M1470 410v54M1401 489l66-24" fill="none"/>
        </g>
        <g class="ticks"><text x="1332" y="357">10</text><text x="1340" y="465">0</text><text x="1338" y="569">-10</text><text x="1383" y="662">10</text><text x="1457" y="717">0</text><text x="1526" y="776">-10</text><text x="1591" y="808">0</text><text x="1641" y="785">5</text><text x="1687" y="763">10</text><text x="1181" y="767">z</text><text x="1158" y="783">y</text><text x="1210" y="788">x</text></g>
        <path d="M1184 796V776" stroke="#1010f0" stroke-width="2"/><path d="M1184 771l3 9h-6z" fill="#1010f0"/>
        <path d="M1184 796l-12-8" stroke="#10e020" stroke-width="2"/><path d="M1166 784l9 1-4 6z" fill="#10e020"/>
        <path d="M1184 796l16-6" stroke="#e01010" stroke-width="2"/><path d="M1208 787l-7 6-3-6z" fill="#e01010"/>
        <use href="#app" x="1890" y="221" width="22" height="22"/>
      </svg>
    </section>

    <section class="panel messages">
      <div class="mtabs"><button class="on">Messages</button><button>Progress</button><button>Log</button><div class="pctl"><svg class="car"><use href="#down"/></svg><svg class="pin"><use href="#pin"/></svg><svg class="cls"><use href="#x"/></svg></div></div>
      <div class="mtools"><button aria-label="Clear messages"><svg class="i"><use href="#broom"/></svg></button></div>
      <div class="logbox">
        <div class="log" role="log"><p>Imported 2 solid objects from D:\Users\Dungeon-PC\Desktop\PSM_2\Autocad File\block_new_update.dwg.</p><p>Formed union of 3 solid objects and 1 curve object.</p><p>Finalized geometry has 3 domains, 17 boundaries, 34 edges, and 24 vertices.</p><p>Saved file: eddy current.mph</p><p>Mesh warning (ftet1): Face is (or has a narrow region that is) much smaller than the specified minimum element size.</p><p>Complete mesh consists of 967617 domain elements, 28056 boundary elements, and 705 edge elements.</p><p>Number of degrees of freedom solved for: 6191396.</p><p>Complete mesh consists of 4527789 domain elements, 75952 boundary elements, and 1177 edge elements.</p></div>
        <div class="vscroll"><button class="s-up" aria-label="Scroll up"></button><div class="s-gap"></div><div class="s-thumb"></div><div class="s-rest"></div><button class="s-dn" aria-label="Scroll down"></button></div>
      </div>
    </section>
  </div>
</main>
<footer class="status">2.32 GB | 2.96 GB</footer>
</body>
</html>
```
FILE: styles.css
```css
* { box-sizing: border-box; }
body {
  margin: 0;
  height: 100vh;
  display: flex;
  flex-direction: column;
  overflow: hidden;
  background: #fafbff;
  color: #000;
  font: 11px/14px "Open Sans", "Noto Sans", sans-serif;
}
h1, h2, h3, p, ul { margin: 0; padding: 0; font-weight: 400; }
button { margin: 0; padding: 0; border: 0; background: none; color: inherit; font: inherit; white-space: nowrap; }
svg { display: block; flex: none; }
.sprite { display: none; }
.i { width: 16px; height: 16px; }
.b { width: 32px; height: 32px; }
.car { width: 8px; height: 8px; }
.pin { width: 10px; height: 12px; }
.cls { width: 10px; height: 10px; }

/* title bar */
.titlebar { flex: none; display: flex; height: 22px; background: #fff; }
.titlebar h1 { flex: 1; padding-left: 94px; font-size: 11px; line-height: 16px; text-align: center; }
.quick { display: flex; align-items: center; gap: 8px; padding-left: 1px; }
.quick .bar { width: 1px; height: 14px; margin: 0 -1px 0 -3px; background: #aaa; }
.quick .last { margin: 0 0 0 3px; }
.caret-btn { margin: 0 -2px; }
.caret-btn .car { width: 6px; height: 6px; }
.win { display: flex; height: 16px; }
.win button { display: flex; align-items: center; justify-content: center; width: 46px; }
.win svg { width: 10px; height: 10px; }

/* ribbon tabs */
.tabs { flex: none; display: flex; height: 25px; background: #f9fafe; border-bottom: 1px solid #bac8dc; color: #2d4a7c; }
.tabs button { padding: 0 14px; height: 25px; }
.tabs .on { background: #fdfdff; border: 1px solid #bac8dc; border-bottom: 0; border-radius: 3px 3px 0 0; color: #3b62a8; padding: 0 13px; }
.tabs .file { display: flex; align-items: center; justify-content: center; gap: 4px; width: 55px; height: 22px; padding: 0; background: linear-gradient(#3a5ea6, #4a74b8 60%, #2f559c); border: 1px solid #2c4f94; color: #fff; }
.tabs .help { width: 14px; height: 14px; margin: 4px 3px 0 auto; padding: 0; background: #3f78b5; color: #fff; }

/* ribbon */
.ribbon { flex: none; display: flex; height: 90px; background: #fdfdff; border-bottom: 1px solid #b9c7da; }
.group { flex: none; display: flex; flex-direction: column; padding-top: 6px; background: linear-gradient(#b9c9dc, #b9c9dc) right 6px / 1px 74px no-repeat; }
.group h2 { margin-top: 4px; color: #707070; font-size: 11px; text-align: center; }
.body { display: grid; height: 61px; }
.stack { display: flex; flex-direction: column; gap: 8px; }
.stack button { display: flex; align-items: center; gap: 2px; height: 14px; }
.stack .car, .big .car { display: inline-block; width: 6px; height: 6px; }
.big { text-align: center; line-height: 13px; display: block; align-self: start; }
.big .b { margin: 0 auto 2px; }
.glyph { display: block; height: 34px; color: #5f87b5; font-size: 18px; line-height: 32px; }
button:disabled { color: #a9abae; }
.g-var { width: 67px; } .g-var .body { padding-right: 2px; }
.g-fun { width: 176px; } .g-fun .body { grid-template-columns: 92px 66px; padding-left: 10px; }
.g-sel { width: 268px; } .g-sel .body { grid-template-columns: 96px 71px 1fr; padding-left: 10px; }
.g-pro { width: 105px; } .g-pro .body { grid-template-columns: 58px 36px; }
.g-mas { width: 143px; } .g-mas .body { padding-left: 11px; }
.g-cou { width: 131px; } .g-cou .body { grid-template-columns: 84px 38px; }
.g-coo { width: 238px; } .g-coo .body { grid-template-columns: 80px 1fr; }
.g-vie { width: 58px; }
.g-ext { width: 214px; } .g-ext .body { padding-left: 10px; }

/* panels */
.work { flex: 1; min-height: 0; display: grid; grid-template-columns: 419fr 708fr 775fr; gap: 6px; padding: 4px 3px 4px; }
.panel { min-width: 0; min-height: 0; display: flex; flex-direction: column; background: #fafbff; border: 1px solid #c9cede; }
.ptitle { flex: none; display: flex; height: 32px; padding: 5px 2px 0 7px; color: #3d5a94; }
.ptitle h2 { flex: 1; font-size: 18px; font-weight: 300; line-height: 28px; }
.pctl { display: flex; gap: 6px; padding-top: 6px; color: #c3c5ca; }
.tools { flex: none; display: flex; flex-wrap: wrap; padding-left: 1px; }
.tools button { display: flex; align-items: center; justify-content: center; width: 24px; height: 20px; }
.tools .drop { width: 18px; }
.tools .near { width: 18px; padding-right: 4px; }
.tools .on .i { background: #c5dbf3; outline: 1px solid #2f65a5; }
.sep { width: 17px; height: 16px; margin-top: 2px; background: linear-gradient(#d0d3da, #d0d3da) center / 1px 100% no-repeat; }
.vscroll { flex: none; display: flex; flex-direction: column; width: 17px; background: #f0f0f0; }
.hscroll { flex: none; display: flex; height: 17px; background: #f0f0f0; }
.s-thumb { background: #cdcdcd; }
.s-rest { flex: 1; }
.vscroll button, .hscroll button { flex: none; display: flex; align-items: center; justify-content: center; width: 17px; height: 17px; }
.vscroll button::before, .hscroll button::before { content: ""; width: 6px; height: 6px; border: solid #909090; border-width: 1px 0 0 1px; }
.s-up::before { transform: rotate(45deg); }
.s-dn::before { transform: rotate(225deg); }
.s-lt::before { transform: rotate(-45deg); }
.s-rt::before { transform: rotate(135deg); }

/* model tree */
.treebox { flex: 1; min-height: 0; display: flex; margin: 3px 4px 8px; background: #fff; border: 1px solid #c9cede; overflow: hidden; }
.tree { flex: 1; min-width: 0; margin-top: -10px; list-style: none; }
.tree li { display: flex; align-items: center; height: 17px; line-height: 17px; white-space: pre; }
.tree .a { width: 8px; height: 8px; margin-right: 6px; }
.tree .i { margin-right: 3px; }
.tree .n0 { padding-left: 6px; } .tree .n1 { padding-left: 25px; } .tree .n2 { padding-left: 44px; } .tree .n3 { padding-left: 63px; }
.tree .n4 { padding-left: 82px; } .tree .n5 { padding-left: 101px; } .tree .n6 { padding-left: 120px; }
.tree .off { color: #7d7d7d; }
.picked { display: flex; align-items: center; padding-right: 3px; background: #dadada; }
.model .s-gap { height: 10px; }
.model .s-thumb { flex: 0 1 723px; }

/* settings */
.settings { border-color: #a9cfe8; }
.settings .ptitle { padding-left: 6px; color: #2f8fd0; }
.settings .pctl { color: #555; padding-top: 5px; }
.settings h3 { flex: none; padding-left: 5px; color: #2f8fd0; font-size: 14px; font-weight: 300; line-height: 24px; }
.cmds { flex: none; display: flex; gap: 12px; height: 21px; padding: 0 6px 6px; }
.cmds button { display: flex; align-items: center; gap: 4px; }
.focus { flex: 1; margin: 0 -1px -1px; border: 1px dashed #5b87b5; }
.sect { display: flex; align-items: center; gap: 15px; width: 100%; height: 24px; padding-left: 5px; background: #dfe8f5; font-size: 12px; }
.errbox { display: flex; flex-direction: column; height: 500px; margin: 9px 4px 0; border: 1px solid #cfd2d9; }
.errbox textarea { display: block; flex: 1; width: 100%; padding: 0 2px; border: 0; outline: 0; resize: none; overflow: hidden; background: transparent; color: #000; font: 11px/15px "Open Sans", "Noto Sans", sans-serif; tab-size: 49px; }
.errbox .s-thumb { width: 44%; }
.errbox .hscroll .s-thumb { margin: 1px 0; }

/* graphics and messages */
.right { min-width: 0; display: flex; flex-direction: column; gap: 5px; }
.graphics { flex: 1; }
.canvas { flex: 1; min-height: 0; width: 100%; margin-top: 3px; }
.canvas .ticks { font: 12px "DejaVu Sans", sans-serif; }
.messages { flex: none; height: 175px; }
.mtabs { flex: none; display: flex; align-items: flex-end; gap: 8px; height: 30px; padding: 5px 2px 0 4px; background: linear-gradient(#c9cede, #c9cede) bottom / 100% 1px no-repeat; font-size: 12px; }
.mtabs button { height: 23px; margin-bottom: 1px; padding: 0 5px; background: #ebebeb; }
.mtabs .on { height: 25px; margin-bottom: 0; background: #fafbff; border: 1px solid #c9cede; border-bottom: 0; color: #3b62a8; }
.mtabs .pctl { align-items: center; margin-left: auto; padding: 0 0 6px; gap: 5px; }
.mtools { flex: none; height: 27px; padding: 6px 5px; }
.logbox { flex: 1; min-height: 0; display: flex; margin-bottom: 5px; overflow: hidden; }
.log { flex: 1; min-width: 0; margin: 0 5px 0 4px; padding: 0 2px; border: solid #d5d8de; border-width: 0 1px; overflow: hidden; line-height: 15px; white-space: nowrap; }
.log p:first-child { margin-top: -8px; }
.messages .s-gap { height: 31px; }
.messages .s-thumb { height: 41px; }

.status { flex: none; height: 28px; padding: 8px 0 0 80%; background: #f0eded; border-bottom: 1px solid #222; }
```
